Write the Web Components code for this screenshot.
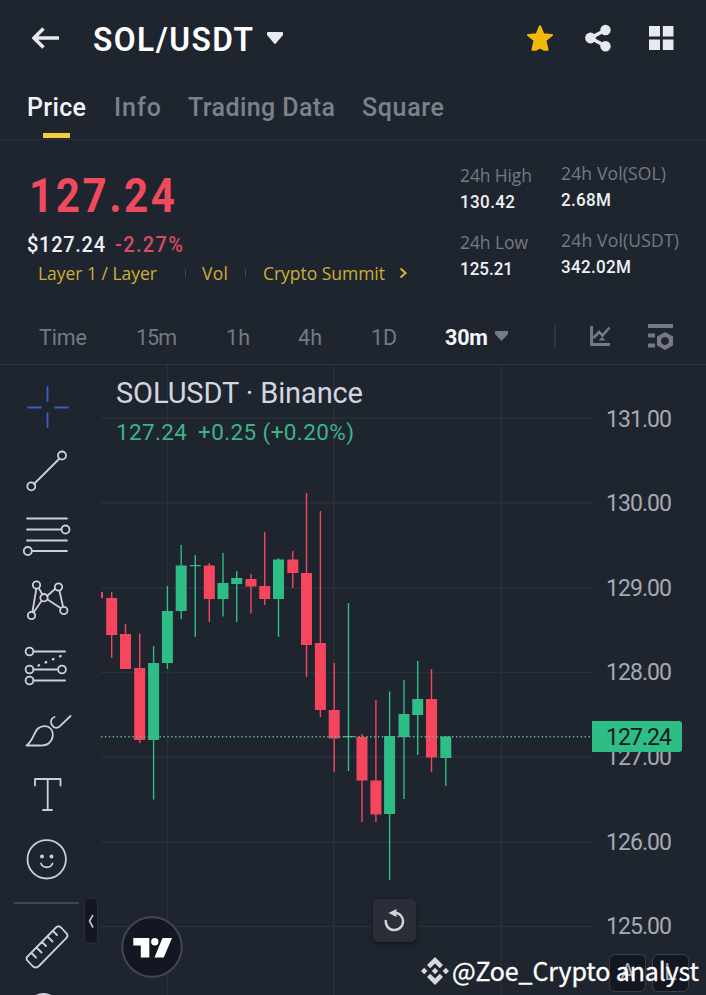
<!DOCTYPE html>
<html lang="en">
<head>
<meta charset="utf-8">
<title>SOL/USDT</title>
<style>
    html, body { margin: 0; height: 100%; }
    body { background: #1f252f; overflow: hidden; }
</style>
</head>
<body>
<trade-page></trade-page>

<script>
// Text run that spreads its letters over a given width (w); sx narrows the glyphs
class FitText extends HTMLElement {
    connectedCallback() {
        const width = Number(this.getAttribute('w'));
        const sx = Number(this.getAttribute('sx') || 1);
        this.attachShadow({ mode: 'open' });
        this.shadowRoot.innerHTML = `
            <style>
                :host { display: block; flex: none; white-space: nowrap; width: ${width}px; }
                span { display: inline-block; transform-origin: 0 50%; }
            </style>
            <span><slot></slot></span>
        `;
        const span = this.shadowRoot.querySelector('span');
        const natural = span.getBoundingClientRect().width;
        const count = this.textContent.length;
        span.style.letterSpacing = ((width / sx - natural) / (count - 1)).toFixed(3) + 'px';
        if (sx !== 1) span.style.transform = `scaleX(${sx})`;
    }
}

class PairHeader extends HTMLElement {
    connectedCallback() {
        this.attachShadow({ mode: 'open' });
        this.shadowRoot.innerHTML = `
            <style>
                :host {
                    display: flex;
                    align-items: center;
                    height: 76px;
                    padding: 0 32px 2px 32px;
                    color: #fdfdfe;
                    font: 600 33px/40px Roboto, sans-serif;
                }
                svg { display: block; flex: none; fill: #e6e9f0; }
                .title { margin: 4px 13px 0 33px; }
                .star { margin-left: auto; }
                .share { margin: 0 38px 0 31px; }
            </style>
            <svg width="28" height="22" viewBox="0 0 28 22"><path d="M11.5 1.5 2 11l9.5 9.5M2.500 11H27" fill="none" stroke="#e6e9f0" stroke-width="3.600"/></svg>
            <fit-text class="title" w="160" sx="0.96">SOL/USDT</fit-text>
            <svg width="18" height="14" viewBox="0 0 18 14"><path d="M2 1h14q1.500 0 1 1.600V4L9.800 12.500q-.8.800-1.600 0L1 4V2.200Q.8 1 2 1z"/></svg>
            <svg class="star" width="28" height="28" viewBox="0 0 28 28"><path d="M14 2.200 17.300 10.200 26 11 19.400 16.600 21.600 25.800H18.300L14 23.300 9.700 25.800H6.400L8.600 16.600 2 11 10.700 10.200z" fill="#f0b90b" stroke="#f0b90b" stroke-width="2" stroke-linejoin="round"/></svg>
            <svg class="share" width="26" height="28" viewBox="0 0 26 28"><path d="M20.500 6 5.500 14l15 8" fill="none" stroke="#e6e9f0" stroke-width="3.600"/><circle cx="20.500" cy="6" r="5.200"/><circle cx="5.500" cy="14" r="5.400"/><circle cx="20.500" cy="22.200" r="5.200"/></svg>
            <svg width="25" height="26" viewBox="0 0 25 26"><path d="M0 1h11v10.500H0zM13.800 1h10.700v10.500H13.800zM0 14.500h11V25H0zM13.800 14.500h10.700V25H13.800z"/></svg>
        `;
    }
}

class PairTabs extends HTMLElement {
    connectedCallback() {
        this.attachShadow({ mode: 'open' });
        this.shadowRoot.innerHTML = `
            <style>
                :host {
                    display: flex;
                    gap: 27px;
                    height: 61px;
                    padding: 0 27px;
                    border-bottom: 1px solid #292e39;
                    color: #7c818e;
                    font: 500 25px/60px Roboto, sans-serif;
                }
                .active {
                    display: flex;
                    flex-direction: column;
                    align-items: center;
                    margin-right: 1px;
                    color: #f2f3f6;
                }
                .active fit-text { height: 55px; }
                i { width: 27px; height: 5px; background: #f5cf3a; }
            </style>
            <div class="active"><fit-text w="59">Price</fit-text><i></i></div>
            <fit-text w="47">Info</fit-text>
            <fit-text w="147">Trading Data</fit-text>
            <fit-text w="82">Square</fit-text>
        `;
    }
}

class StatCell extends HTMLElement {
    connectedCallback() {
        this.attachShadow({ mode: 'open' });
        this.shadowRoot.innerHTML = `
            <style>
                :host { display: block; height: 67px; line-height: 26px; }
                .label { color: #757a85; font: 400 17.500px/23px "Open Sans", sans-serif; }
                .value { color: #eef0f4; font: 500 18.500px/27px Roboto, sans-serif; margin-top: 2px; }
            </style>
            <fit-text class="label" w="${this.getAttribute('lw')}">${this.getAttribute('label')}</fit-text>
            <fit-text class="value" sx="0.92" w="${this.getAttribute('vw')}">${this.getAttribute('value')}</fit-text>
        `;
    }
}

class PairStats extends HTMLElement {
    connectedCallback() {
        this.attachShadow({ mode: 'open' });
        this.shadowRoot.innerHTML = `
            <style>
                :host { display: flex; height: 170px; }
                .left { width: 460px; padding-top: 26px; box-sizing: border-box; }
                .price { margin-left: 29px; color: #f04a5f; font: 700 49px/60px Roboto, sans-serif; }
                .row { display: flex; align-items: center; }
                .sub { gap: 10px; margin-left: 27px; font: 500 21.500px/32px Roboto, sans-serif; color: #eef0f5; margin-top: 3px; }
                .down { color: #dc4a60; }
                .tags { margin: -1px 0 0 38px; height: 26px; font: 400 17.500px/26px "Open Sans", sans-serif; color: #ceae35; }
                .tags i { width: 1px; height: 8px; background: #424750; }
                .col { width: 101px; padding-top: 24px; }
                .col + .col { padding-top: 22px; }
            </style>
            <div class="left">
                <fit-text class="price" sx="0.86" w="146">127.24</fit-text>
                <div class="row sub"><fit-text sx="0.93" w="78">$127.24</fit-text><fit-text class="down" sx="0.93" w="68">-2.27%</fit-text></div>
                <div class="row tags">
                    <fit-text w="119">Layer 1 / Layer</fit-text>
                    <i style="margin: 0 16px 0 28px"></i>
                    <fit-text w="26">Vol</fit-text>
                    <i style="margin: 0 17px 0 17px"></i>
                    <fit-text w="122">Crypto Summit</fit-text>
                    <svg width="9" height="12" viewBox="0 0 9 12" style="margin-left: 14px"><path d="M1.500 1.500 6.500 6l-5 4.500" fill="none" stroke="#ceae35" stroke-width="2.200"/></svg>
                </div>
            </div>
            <div class="col">
                <stat-cell label="24h High" lw="72" value="130.42" vw="55"></stat-cell>
                <stat-cell label="24h Low" lw="68" value="125.21" vw="53"></stat-cell>
            </div>
            <div class="col">
                <stat-cell label="24h Vol(SOL)" lw="105" value="2.68M" vw="50"></stat-cell>
                <stat-cell label="24h Vol(USDT)" lw="118" value="342.02M" vw="70"></stat-cell>
            </div>
        `;
    }
}

class IntervalBar extends HTMLElement {
    connectedCallback() {
        this.attachShadow({ mode: 'open' });
        this.shadowRoot.innerHTML = `
            <style>
                :host {
                    display: flex;
                    align-items: center;
                    height: 55px;
                    padding: 1px 0 0 39px;
                    box-sizing: border-box;
                    border-bottom: 1px solid #2b303b;
                    color: #747985;
                    font: 400 21.500px/52px Roboto, sans-serif;
                }
                svg { display: block; flex: none; }
                .active { color: #f2f3f6; font-weight: 700; }
                i { width: 2px; height: 22px; margin-bottom: 2px; background: #303540; }
            </style>
            <fit-text w="48">Time</fit-text>
            <fit-text w="41" style="margin-left: 49px">15m</fit-text>
            <fit-text w="24" style="margin-left: 49px">1h</fit-text>
            <fit-text w="24" style="margin-left: 48px">4h</fit-text>
            <fit-text w="26" style="margin-left: 49px">1D</fit-text>
            <fit-text class="active" w="43" style="margin-left: 48px">30m</fit-text>
            <svg width="13" height="10" viewBox="0 0 13 10" style="margin: 0 46px 3px 7px"><path d="M0 0h13v3L6.500 10 0 3z" fill="#757a84"/></svg>
            <i></i>
            <svg width="21" height="21" viewBox="0 0 21 21" style="margin: 0 37px 3px 34px" fill="none" stroke="#757a84"><path d="M1.600 0v18.600H20" stroke-width="3"/><path d="M3.500 12 9 6l3.500 3.500L19.500 1.500" stroke-width="2.600"/><path d="M8.500 14.500 12 11l3.500 3.500z" fill="#757a84" stroke="none"/></svg>
            <svg width="26" height="26" viewBox="0 0 26 26" style="margin-bottom: 2px" fill="#757a84"><path d="M0 0h25v4H0zM0 9.500h7v4H0zM0 19.500h7v4H0z"/><path fill-rule="evenodd" d="M17 8l8 4.500v9L17 26l-8-4.500v-9zM17 13a4 4 0 1 0 .01 0z"/></svg>
        `;
    }
}

class DrawTools extends HTMLElement {
    connectedCallback() {
        // [top of the icon's box, markup]
        const tools = [
            [375, '<path d="M47.500 387v14M47.500 413v14M28 407.500h13M55 407.500h13" stroke="#3d5cc4"/>'],
            [439, '<path d="M34 484 59.500 458.500"/><circle cx="31.300" cy="486.300" r="4"/><circle cx="62" cy="455.500" r="4"/>'],
            [504, '<path d="M27 518.500h40M27 529.500h34.500M27 540.500h40M32 551h35"/><circle cx="65.500" cy="529.500" r="4"/><circle cx="27.800" cy="551" r="4"/>'],
            [568, '<path d="M32.500 611.500 36.300 589M33.500 612.500 41.500 601M39 588.500 42.500 594.500M47 596 55 589M47.500 599.500 60.500 608M59.500 591 63 606.500"/><circle cx="36.500" cy="585" r="3.700"/><circle cx="58.500" cy="587" r="3.700"/><circle cx="44" cy="597.700" r="3.700"/><circle cx="31.500" cy="615.500" r="3.700"/><circle cx="63.800" cy="610.500" r="3.700"/>'],
            [633, '<path d="M33.500 651.500H65M33.500 669.500h24.500M33.500 680.500H65"/><path d="M38.500 665.500 63 655" stroke-dasharray=".6 7.200" stroke-width="2.400"/><circle cx="29.500" cy="651.500" r="3.900"/><circle cx="29.500" cy="669.500" r="3.900"/><circle cx="29.500" cy="680.500" r="3.900"/><circle cx="62" cy="669.500" r="3.900"/>'],
            [697, '<path d="M26.500 745.500C33 741 34 732 38 728.500c4-3.500 10-3 12.500 0 4 4.500 2.500 11.500-2 15-3 2.500-6 2-10 2zM54.500 717c-3.500 1-4.500 5-2.500 8 2 3.500 5.500 3.500 8 1.200L70.500 716"/>'],
            [762, '<path d="M35 785.500v-6.500h25.500v6.500M47.700 779v31M43 810h9"/>'],
            [826, '<circle cx="46.700" cy="859.300" r="19.200"/><circle cx="42" cy="856.500" r="1.900" fill="#ccd0db" stroke="none"/><circle cx="51.500" cy="856.500" r="1.900" fill="#ccd0db" stroke="none"/><path d="M41 863.500c2 5 9.500 5 11.500 0"/>']
        ];
        this.attachShadow({ mode: 'open' });
        this.shadowRoot.innerHTML = `
            <style>
                :host {
                    display: flex;
                    flex-direction: column;
                    width: 100px;
                    padding-top: 10px;
                    box-sizing: border-box;
                    overflow: hidden;
                }
                .tools { display: grid; grid-template-rows: 64px 65px 64px 65px 64px 65px 64px 65px; }
                svg { display: block; overflow: visible; fill: none; stroke: #ccd0db; stroke-width: 1.800; stroke-linecap: round; stroke-linejoin: round; }
                hr { flex: none; width: 65px; height: 2px; margin: 11px 0 11px 14px; border: 0; background: #424650; }
            </style>
            <div class="tools">
                ${tools.map(([y, art]) => `<svg width="100" height="64" viewBox="0 ${y} 100 64">${art}</svg>`).join('')}
            </div>
            <hr>
            <svg width="100" height="80" viewBox="0 915 100 80">
                <path d="M28.500 955.500 56 927.500q2.500-2.500 5 0l5.500 5.800q2 2.500 0 4.500L39 966q-3.500 3-6.500 0L27 960.200q-1.500-2.500 1.500-4.700zM31.500 953l4.500 4.500M36.500 947.500l5 5M42 942l4 4M47.500 936.500l5 5M53 931l4 4"/>
                <circle cx="43.500" cy="1010" r="16"/>
            </svg>
        `;
    }
}

class CandleChart extends HTMLElement {
    connectedCallback() {
        // centre, wick top, wick bottom, body top, body bottom, rising
        const candles = [
            [111.700, 592, 658, 598, 635, 0],
            [125.500, 624, 669, 634, 669, 0],
            [139.700, 633.500, 743, 668, 740, 0],
            [153.600, 646, 799.500, 663, 740, 1],
            [167.400, 586, 669, 611, 663, 1],
            [181.200, 545, 619, 565.500, 611, 1],
            [195.300, 555, 637, 565, 566.200, 1],
            [209.300, 563, 622, 565.500, 599, 0],
            [223, 553, 616.500, 583, 599, 1],
            [236.700, 571, 622, 578, 584, 1],
            [251, 574, 613.500, 579, 586.500, 0],
            [264.700, 532, 605, 586, 599, 0],
            [278.500, 558, 637, 559.500, 599, 1],
            [292.800, 551, 588, 559.500, 573, 0],
            [306.500, 493, 677, 573, 645, 0],
            [320.400, 511, 717, 643, 710, 0],
            [334.200, 663, 772, 710, 738.500, 0],
            [348.500, 603, 771, 736, 737.200, 1],
            [362, 734, 822, 737, 780.500, 0],
            [375.900, 700, 822, 780.500, 814.500, 0],
            [389.600, 691.500, 880, 736, 814, 1],
            [404, 680, 799, 714, 737, 1],
            [417.700, 661, 755, 699, 715, 1],
            [431.500, 669, 772, 699, 757.500, 0],
            [445.800, 736, 786, 736.500, 758, 1]
        ];
        const bars = candles.map(([x, top, bottom, open, close, up]) => `
            <g fill="${up ? '#2ebd85' : '#f6465d'}">
                <rect x="${x - 0.7}" y="${top}" width="1.400" height="${bottom - top}"/>
                <rect x="${x - 5.5}" y="${open}" width="11" height="${close - open}"/>
            </g>`).join('');
        const rows = [418, 503, 588, 672.5, 757, 842, 926.5];
        this.attachShadow({ mode: 'open' });
        this.shadowRoot.innerHTML = `
            <style>
                :host { display: block; position: relative; width: 492px; }
                svg { display: block; }
                .legend { position: absolute; left: 16px; top: 10px; font: 400 29px/36px Roboto, sans-serif; color: #d3d6e0; }
                .change { display: flex; gap: 11px; margin: 5px 0 0 0; font-size: 22.500px; line-height: 32px; color: #3cb487; }
                .logo { position: absolute; left: 21px; top: 551px; }
                .reset {
                    position: absolute; left: 273px; top: 534px; width: 43px; height: 43px;
                    border-radius: 6px; background: #2a2e39; box-shadow: 0 2px 5px #12161d;
                }
                .fold {
                    position: absolute; left: -16px; top: 533px; width: 12px; height: 44px;
                    border: 1px solid #2a2e3a; border-radius: 5px; background: #131722;
                }
            </style>
            <svg width="492" height="630" viewBox="100 365 492 630">
                <path d="${rows.map(y => `M101 ${y}H592`).join('')}M167.500 365V995M334 365V995M501.500 365V995" stroke="#2b303a" stroke-width="1.400"/>
                <rect x="101" y="592" width="2" height="6" fill="#f6465d"/>
                ${bars}
                <path d="M101 736.700H592" stroke="#62b59a" stroke-width="1.400" stroke-dasharray="1.400 2.500"/>
            </svg>
            <div class="legend">
                <fit-text w="247">SOLUSDT · Binance</fit-text>
                <div class="change"><fit-text w="71">127.24</fit-text><fit-text w="156">+0.25 (+0.20%)</fit-text></div>
            </div>
            <svg class="logo" width="62" height="62" viewBox="0 0 62 62">
                <circle cx="31" cy="31" r="29.700" fill="#131722" stroke="#434651" stroke-width="2"/>
                <path d="M12.300 22h16v19.500h-8.500V29.500h-7.500zM41.500 22h9.500L42.700 41.500h-9.200z" fill="#fff"/><circle cx="33.800" cy="25.700" r="3.700" fill="#fff"/>
            </svg>
            <div class="reset"><svg width="43" height="43" viewBox="0 0 43 43"><path d="M12.800 21a8.700 8.700 0 1 0 8.700-7.300H19" fill="none" stroke="#d1d4dc" stroke-width="2.500"/><path d="M15.500 14 23.500 10v8z" fill="#d1d4dc"/></svg></div>
            <div class="fold"><svg width="12" height="44" viewBox="0 0 12 44"><path d="M8 16 4.500 22 8 28.500" fill="none" stroke="#c3c6cf" stroke-width="1.600"/></svg></div>
        `;
    }
}

class PriceAxis extends HTMLElement {
    connectedCallback() {
        const prices = ['131.00', '130.00', '129.00', '128.00', '127.00', '126.00', '125.00'];
        this.attachShadow({ mode: 'open' });
        this.shadowRoot.innerHTML = `
            <style>
                :host { display: block; position: relative; width: 114px; font: 400 23px/84.670px Roboto, sans-serif; color: #a6a9b3; }
                .scale { display: grid; grid-auto-rows: 84.670px; padding: 12.500px 0 0 14px; }
                .last {
                    position: absolute; left: 0; top: 356px; width: 90px; height: 31px; box-sizing: border-box; padding-left: 14px;
                    border-radius: 0 3px 3px 0; background: #2ebd85; color: #111a1f; line-height: 34px;
                }
                .modes { position: absolute; left: 17px; top: 589px; display: flex; gap: 6px; }
                .modes b {
                    width: 35px; height: 36px; border: 1px solid #3a3e49; border-radius: 6px;
                    background: #131722; color: #a2a5b0; font: 400 23px/36px Roboto, sans-serif; text-align: center;
                }
            </style>
            <div class="scale">${prices.map(p => `<fit-text w="66">${p}</fit-text>`).join('')}</div>
            <div class="last"><fit-text w="66">127.24</fit-text></div>
            <div class="modes"><b>A</b><b>L</b></div>
        `;
    }
}

class AuthorMark extends HTMLElement {
    connectedCallback() {
        this.attachShadow({ mode: 'open' });
        this.shadowRoot.innerHTML = `
            <style>
                :host {
                    display: flex;
                    align-items: center;
                    gap: 3px;
                    position: absolute;
                    left: 421px;
                    top: 953px;
                    color: #fff;
                    font: 400 25px/36px "Noto Sans CJK SC", sans-serif;
                    -webkit-text-stroke: 0.3px #fff;
                }
                fit-text { margin-top: -1px; }
            </style>
            <svg width="28" height="28" viewBox="0 0 28 28" fill="#d8d8d9"><path d="M14 0l8 8-3.200 3.200L14 6.400l-4.800 4.800L6 8zM14 28l-8-8 3.200-3.200 4.800 4.800 4.800-4.800L22 20zM14 10.800l3.200 3.200-3.200 3.200-3.200-3.200zM3.200 10.800 6.400 14l-3.200 3.200L0 14zM24.800 10.800 28 14l-3.200 3.200-3.200-3.200z"/></svg>
            <fit-text w="247">@Zoe_Crypto analyst</fit-text>
        `;
    }
}

class TradePage extends HTMLElement {
    connectedCallback() {
        this.attachShadow({ mode: 'open' });
        this.shadowRoot.innerHTML = `
            <style>
                :host {
                    display: block;
                    position: relative;
                    width: 706px;
                    height: 995px;
                    overflow: hidden;
                    background: #1f252f;
                }
                main { display: flex; height: 630px; }
            </style>
            <pair-header></pair-header>
            <pair-tabs></pair-tabs>
            <pair-stats></pair-stats>
            <interval-bar></interval-bar>
            <main>
                <draw-tools></draw-tools>
                <candle-chart></candle-chart>
                <price-axis></price-axis>
            </main>
            <author-mark></author-mark>
        `;
    }
}

customElements.define('fit-text', FitText);
customElements.define('pair-header', PairHeader);
customElements.define('pair-tabs', PairTabs);
customElements.define('stat-cell', StatCell);
customElements.define('pair-stats', PairStats);
customElements.define('interval-bar', IntervalBar);
customElements.define('draw-tools', DrawTools);
customElements.define('candle-chart', CandleChart);
customElements.define('price-axis', PriceAxis);
customElements.define('author-mark', AuthorMark);
customElements.define('trade-page', TradePage);
</script>
</body>
</html>
